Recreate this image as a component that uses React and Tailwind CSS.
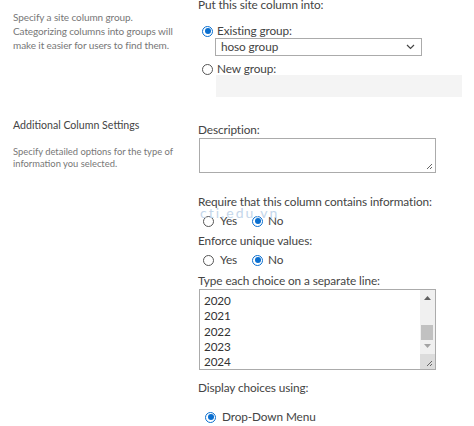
import React from "react";

const font = { fontFamily: 'Lato, "Open Sans", sans-serif' };

/**
 * Round radio button drawn like the Windows one
 * @param { boolean } checked Radio state
 */
function Radio({ checked }) {
	if (checked) {
		return (
			<span className="flex h-[11px] w-[11px] shrink-0 items-center justify-center rounded-full border border-[#0a6fd0] bg-white">
				<span className="h-[6px] w-[6px] rounded-full bg-[#0a6fd0]" />
			</span>
		);
	}
	return (
		<span className="h-[11px] w-[11px] shrink-0 rounded-full border border-[#555] bg-white" />
	);
}

function Grip() {
	return (
		<svg width="8" height="8" viewBox="0 0 8 8" className="absolute bottom-[2px] right-[2px]">
			<path d="M7 2 L2 7 M7 5 L5 7" stroke="#666" strokeWidth="1" fill="none" />
		</svg>
	);
}

/**
 * Yes / No radio pair
 */
function YesNo() {
	return (
		<div className="mt-[3px] flex h-[16px] items-center pl-[5px] leading-[16px]">
			<Radio />
			<span className="ml-[6px]">Yes</span>
			<span className="ml-[15px]">
				<Radio checked />
			</span>
			<span className="ml-[5px]">No</span>
		</div>
	);
}

export default function App() {
	const choices = ["2020", "2021", "2022", "2023", "2024"];

	return (
		<div className="relative flex h-[426px] w-[474px] overflow-hidden whitespace-nowrap bg-white" style={font}>
			<div className="w-[198px] shrink-0 pl-[13px]">
				<div className="mt-[10px] text-[10px] leading-[14px] tracking-[-0.1px] text-[#777]">
					Specify a site column group.
					<br />
					Categorizing columns into groups will
					<br />
					make it easier for users to find them.
				</div>
				<div className="mt-[65px] text-[10.6px] leading-[16px] text-[#444]">
					Additional Column Settings
				</div>
				<div className="mt-[13px] text-[9.4px] leading-[12px] text-[#777]">
					Specify detailed options for the type of
					<br />
					information you selected.
				</div>
			</div>

			<div className="flex-1 text-[11.8px] tracking-[-0.1px] text-[#444]">
				<div className="mt-[-3px] h-[16px] leading-[16px]">Put this site column into:</div>

				<div className="mt-[11px] flex h-[14px] items-center gap-[4px] pl-[4px] leading-[14px]">
					<Radio checked />
					<span>Existing group:</span>
				</div>
				<div className="ml-[17px] flex h-[18px] w-[207px] items-center justify-between border border-[#ababab] pl-[5px] pr-[6px] leading-[16px]">
					<span>hoso group</span>
					<svg width="9" height="6" viewBox="0 0 9 6">
						<path d="M1 1 L4.5 4.5 L8 1" stroke="#444" strokeWidth="1.2" fill="none" />
					</svg>
				</div>
				<div className="mt-[7px] flex h-[12px] items-center gap-[4px] pl-[4px] leading-[12px]">
					<Radio />
					<span>New group:</span>
				</div>
				<div className="ml-[18px] h-[22px] w-[246px] bg-[#f4f4f4]" />

				<div className="mt-[25px] h-[16px] leading-[16px]">Description:</div>
				<div className="relative ml-[1px] h-[35px] w-[237px] border border-[#ababab]">
					<Grip />
				</div>

				<div className="mt-[21px] h-[16px] leading-[16px]">
					Require that this column contains information:
				</div>
				<YesNo />
				<div className="mt-[4px] h-[16px] leading-[16px]">Enforce unique values:</div>
				<YesNo />
				<div className="mt-[5px] h-[16px] leading-[16px]">Type each choice on a separate line:</div>
				<div className="ml-[1px] flex h-[81px] w-[237px] border border-[#ababab]">
					<div className="flex-1 pl-[4px] pt-[3px] text-[11.7px] leading-[15.3px] text-[#333]">
						{choices.map((choice) => (
							<div key={choice}>{choice}</div>
						))}
					</div>
					<div className="flex w-[15px] flex-col bg-[#f0f0f0]">
						<div className="flex h-[16px] items-center justify-center">
							<svg width="7" height="4" viewBox="0 0 7 4">
								<path d="M0 4 L3.5 0 L7 4 Z" fill="#606060" />
							</svg>
						</div>
						<div className="mt-[19px] ml-[1px] h-[15px] w-[12px] bg-[#c1c1c1]" />
						<div className="flex h-[12px] items-center justify-center">
							<svg width="7" height="4" viewBox="0 0 7 4">
								<path d="M0 0 L3.5 4 L7 0 Z" fill="#a3a3a3" />
							</svg>
						</div>
						<div className="relative mt-auto h-[15px] bg-[#dcdcdc]">
							<Grip />
						</div>
					</div>
				</div>

				<div className="mt-[10px] h-[16px] leading-[16px]">Display choices using:</div>
				<div className="mt-[13px] flex h-[16px] items-center pl-[7px] leading-[16px]">
					<Radio checked />
					<span className="ml-[6px]">Drop-Down Menu</span>
				</div>
			</div>

			<div className="absolute left-[200px] top-[205px] text-[14px] leading-[16px] tracking-[2px] text-[#c4d6ea]">
				cti.edu.vn
			</div>
		</div>
	);
}
